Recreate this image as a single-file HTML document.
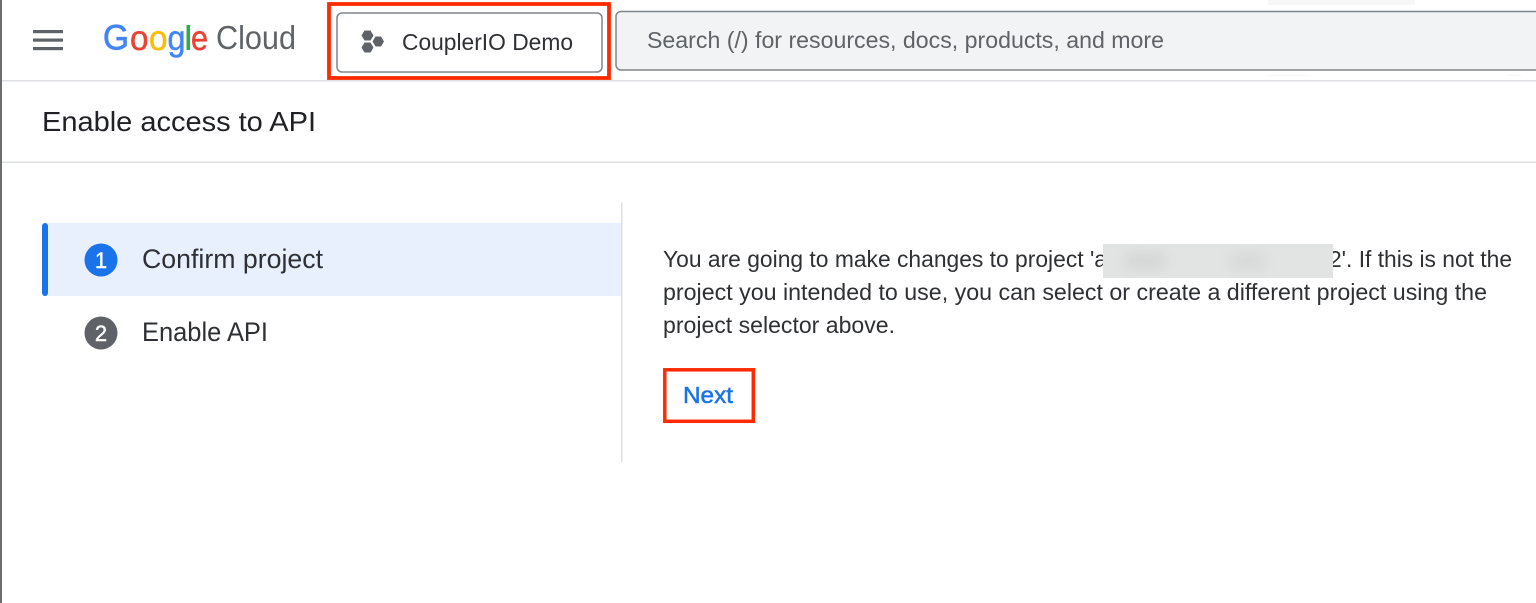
<!DOCTYPE html>
<html lang="en">
<head>
<meta charset="utf-8">
<title>Enable access to API</title>
<style>
html,body{margin:0;padding:0;width:1536px;height:603px;overflow:hidden;background:#fff}
svg{display:block}
text{font-family:"Liberation Sans",sans-serif;fill:#2e3033;letter-spacing:0}
</style>
</head>
<body>
<svg width="1536" height="603" viewBox="0 0 1536 603" xmlns="http://www.w3.org/2000/svg">
<defs><filter id="b" x="-30%" y="-50%" width="160%" height="200%"><feGaussianBlur stdDeviation="6"/></filter>
<clipPath id="c"><rect x="1103" y="244" width="230" height="34"/></clipPath></defs>
<rect width="1536" height="603" fill="#fff"/>
<rect x="1268" y="0" width="147" height="5" fill="#f7f7f7"/>
<rect x="1268" y="75" width="42" height="1" fill="#f7f7f7"/>
<rect x="1507" y="75" width="15" height="1" fill="#f7f7f7"/>
<rect x="0" y="0" width="2" height="603" fill="#6b6d70"/>
<rect x="2" y="80" width="1534" height="1.5" fill="#dfe0e4"/>
<rect x="2" y="161.500" width="1534" height="1.5" fill="#dfe0e4"/>

<!-- hamburger -->
<rect x="33" y="30" width="30" height="3.200" fill="#5f6368"/>
<rect x="33" y="38.500" width="30" height="3.200" fill="#5f6368"/>
<rect x="33" y="47" width="30" height="3.200" fill="#5f6368"/>

<!-- logo -->
<text x="103" y="49.500" font-size="35" style="fill:#4285f4;stroke:#4285f4;stroke-width:.7" textLength="26" lengthAdjust="spacingAndGlyphs">G</text>
<text x="130" y="50" font-size="35" style="fill:#ea4335;stroke:#ea4335;stroke-width:.5" textLength="18.500" lengthAdjust="spacingAndGlyphs">o</text>
<text x="149" y="50" font-size="35" style="fill:#fbbc04;stroke:#fbbc04;stroke-width:.5" textLength="18.500" lengthAdjust="spacingAndGlyphs">o</text>
<text x="167.500" y="50" font-size="35" style="fill:#4285f4;stroke:#4285f4;stroke-width:.5" textLength="18" lengthAdjust="spacingAndGlyphs">g</text>
<rect x="186.500" y="25" width="3.600" height="25" fill="#34a853"/>
<text x="191" y="50" font-size="35" style="fill:#ea4335;stroke:#ea4335;stroke-width:.5" textLength="17" lengthAdjust="spacingAndGlyphs">e</text>
<text x="216" y="49" font-size="33" style="fill:#5f6368" textLength="80" lengthAdjust="spacingAndGlyphs">Cloud</text>

<!-- project selector -->
<rect x="337" y="13" width="265" height="59" rx="5" fill="#fff" stroke="#80868b" stroke-width="1.500"/>
<rect x="329" y="4" width="280" height="74" fill="none" stroke="#ff2a00" stroke-width="3.800"/>
<polygon points="361.500,35.500 364.500,30.500 370.500,30.500 373.500,35.500 370.500,40.500 364.500,40.500" fill="#5f6368"/>
<polygon points="372.500,41.500 375.500,36.500 381,36.500 384,41.500 381,46.500 375.500,46.500" fill="#5f6368"/>
<polygon points="361.500,47.500 364.500,42.500 370.500,42.500 373.500,47.500 370.500,52.500 364.500,52.500" fill="#5f6368"/>
<text x="402" y="50" font-size="23" textLength="171" lengthAdjust="spacingAndGlyphs">CouplerIO Demo</text>

<!-- search -->
<rect x="616" y="11.500" width="960" height="58.500" rx="5" fill="#f1f3f4" stroke="#80868b" stroke-width="1.500"/>
<text x="647" y="48" font-size="23" style="fill:#5f6368" textLength="517" lengthAdjust="spacingAndGlyphs">Search (/) for resources, docs, products, and more</text>

<!-- title -->
<text x="42" y="131" font-size="28" style="fill:#202124" textLength="274" lengthAdjust="spacingAndGlyphs">Enable access to API</text>

<!-- stepper -->
<rect x="44" y="223" width="578" height="73" fill="#e8f0fe"/>
<rect x="42" y="223" width="6" height="73" rx="3" fill="#1a73e8"/>
<circle cx="101" cy="260" r="16.500" fill="#1a73e8"/>
<text x="101" y="268" font-size="22" text-anchor="middle" style="fill:#fff;stroke:#fff;stroke-width:.4">1</text>
<text x="142" y="268" font-size="27" style="fill:#2e3033" textLength="181" lengthAdjust="spacingAndGlyphs">Confirm project</text>
<circle cx="101" cy="333" r="16.500" fill="#5f6368"/>
<text x="101" y="341" font-size="22" text-anchor="middle" style="fill:#fff;stroke:#fff;stroke-width:.4">2</text>
<text x="142" y="341" font-size="27" style="fill:#2e3033" textLength="126" lengthAdjust="spacingAndGlyphs">Enable API</text>
<rect x="621" y="203" width="1.500" height="259" fill="#dfe0e4"/>

<!-- content -->
<text x="663" y="267" font-size="23" textLength="444" lengthAdjust="spacingAndGlyphs">You are going to make changes to project 'a</text>
<text x="1329" y="267" font-size="23" textLength="183" lengthAdjust="spacingAndGlyphs">2'. If this is not the</text>
<g clip-path="url(#c)"><rect x="1103" y="244" width="230" height="34" fill="#e2e3e3"/>
<rect x="1125" y="252" width="40" height="18" fill="#d6d7d7" filter="url(#b)"/>
<rect x="1230" y="252" width="35" height="18" fill="#d8d9d9" filter="url(#b)"/></g>
<text x="663" y="300" font-size="23" textLength="824" lengthAdjust="spacingAndGlyphs">project you intended to use, you can select or create a different project using the</text>
<text x="663" y="333" font-size="23" textLength="232" lengthAdjust="spacingAndGlyphs">project selector above.</text>

<!-- next -->
<rect x="664.800" y="369.800" width="88.500" height="51.500" fill="none" stroke="#ff2a00" stroke-width="3.500"/>
<text x="683" y="403" font-size="23" style="fill:#1a73e8;stroke:#1a73e8;stroke-width:.5" textLength="50" lengthAdjust="spacingAndGlyphs">Next</text>
</svg>
</body>
</html>
